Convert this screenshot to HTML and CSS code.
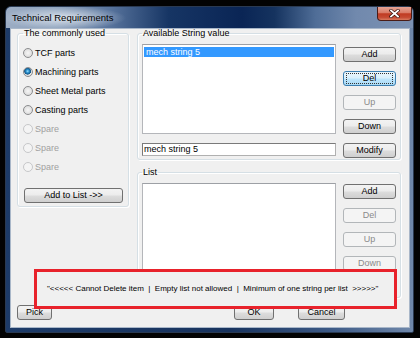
FILE: index.html
```html
<!DOCTYPE html>
<html>
<head>
<meta charset="utf-8">
<link rel="stylesheet" href="styles.css">
</head>
<body>
<div class="window">
  <div class="titlebar">
    <span class="title">Technical Requirements</span>
    <div class="close">
      <svg width="11" height="9" viewBox="0 0 11 9">
        <path d="M2 1.5 L9 7.5 M9 1.5 L2 7.5" stroke="#3a1410" stroke-width="3.2" stroke-linecap="square" fill="none"/>
        <path d="M2 1.5 L9 7.5 M9 1.5 L2 7.5" stroke="#ffffff" stroke-width="1.8" stroke-linecap="square" fill="none"/>
      </svg>
    </div>
  </div>
  <div class="client">
    <div class="main">
      <fieldset class="group common">
        <legend>The commonly used</legend>
        <div class="radios">
          <label class="radio"><span class="dot"></span>TCF parts</label>
          <label class="radio checked"><span class="dot"></span>Machining parts</label>
          <label class="radio"><span class="dot"></span>Sheet Metal parts</label>
          <label class="radio"><span class="dot"></span>Casting parts</label>
          <label class="radio disabled"><span class="dot"></span>Spare</label>
          <label class="radio disabled"><span class="dot"></span>Spare</label>
          <label class="radio disabled"><span class="dot"></span>Spare</label>
        </div>
        <button class="btn wide">Add to List -&gt;&gt;</button>
      </fieldset>
      <div class="rightcol">
        <fieldset class="group avail">
          <legend>Available String value</legend>
          <div class="pane">
            <div class="inputs">
              <div class="listbox short"><div class="item selected">mech string 5</div></div>
              <div class="textbox">mech string 5</div>
            </div>
            <div class="btncol">
              <button class="btn">Add</button>
              <button class="btn focused"><span class="focusrect">Del</span></button>
              <button class="btn" disabled>Up</button>
              <button class="btn">Down</button>
              <button class="btn">Modify</button>
            </div>
          </div>
        </fieldset>
        <fieldset class="group list">
          <legend>List</legend>
          <div class="pane">
            <div class="inputs">
              <div class="listbox tall"></div>
            </div>
            <div class="btncol top1">
              <button class="btn">Add</button>
              <button class="btn" disabled>Del</button>
              <button class="btn" disabled>Up</button>
              <button class="btn" disabled>Down</button>
            </div>
          </div>
        </fieldset>
      </div>
    </div>
    <div class="footer">
      <button class="btn pick">Pick</button>
      <div class="spacer"></div>
      <button class="btn ok">OK</button>
      <button class="btn cancel">Cancel</button>
    </div>
    <div class="note">"&lt;&lt;&lt;&lt;&lt; Cannot Delete item &nbsp;|&nbsp; Empty list not allowed &nbsp;|&nbsp; Minimum of one string per list &nbsp;&gt;&gt;&gt;&gt;&gt;"</div>
  </div>
</div>
</body>
</html>
```

FILE: styles.css
```css
* { box-sizing: border-box; }

body {
  margin: 0;
  width: 420px;
  height: 338px;
  overflow: hidden;
  background: #030303;
  font-family: "Liberation Sans", Arial, sans-serif;
  font-size: 9px;
  color: #000;
}

.window {
  margin: 6px 0 0 5px;
  width: 409px;
  height: 327px;
  border: 1px solid #2a3a52;
  border-radius: 6px 6px 2px 2px;
  background: linear-gradient(90deg, #1d3b68 0%, #18335e 55%, #3d5a86 80%, #7088aa 100%);
  padding: 0 3px 4px 4px;
  display: flex;
  flex-direction: column;
}

.titlebar {
  height: 21px;
  margin: 0 -3px 0 -4px;
  padding: 0 2px 0 5px;
  border-radius: 5px 5px 0 0;
  display: flex;
  align-items: flex-start;
  background:
    radial-gradient(ellipse 62px 12px at 58px 11px, rgba(235,240,246,0.85), rgba(235,240,246,0) 100%),
    linear-gradient(90deg, #9cadc4 0%, #8a9fba 12%, #56729b 26%, #163564 40%, #0a2555 58%, #15335f 66%, #4f6d97 76%, #7189ad 86%, #7c92b3 100%);
}

.title {
  flex: 1;
  padding-left: 1px;
  line-height: 21px;
  font-size: 9.5px;
  color: #000;
}

.close {
  width: 35px;
  height: 14px;
  margin-right: -1px;
  border: 1px solid #4a1c16;
  border-top: none;
  border-radius: 0 0 4px 4px;
  background: linear-gradient(#e6a595 0%, #d97a66 45%, #c03a22 52%, #c54a33 80%, #d87a5e 100%);
  display: flex;
  align-items: center;
  justify-content: center;
}

.client {
  position: relative;
  flex: 1;
  background: #f0f0f0;
  border: 1px solid #a9b7c9;
  padding: 0 8px 0 6px;
  display: flex;
  flex-direction: column;
}

.main {
  display: flex;
  gap: 8px;
  height: 269px;
}

.group {
  margin: 0;
  border: 1px solid #d5dfe5;
  border-radius: 3px;
  box-shadow: inset 1px 1px 0 #fff, 1px 1px 0 #fff;
  min-width: 0;
}

.group legend {
  padding: 0 1px;
  line-height: 9px;
  font-size: 9px;
}

.common {
  width: 113px;
  height: 178px;
  padding: 0 6px 0 5px;
  align-self: flex-start;
}

.radios {
  margin-top: 5px;
  display: flex;
  flex-direction: column;
}

.radio {
  height: 19px;
  display: flex;
  align-items: center;
  gap: 2px;
}

.dot {
  width: 10px;
  height: 10px;
  border-radius: 50%;
  border: 1px solid #8b8c8e;
  background: radial-gradient(circle at 50% 50%, #f6f6f6 0, #e2e2e2 60%, #d0d0d0 100%);
}

.radio.checked .dot {
  background:
    radial-gradient(circle at 45% 40%, #9fe0ff 0, #3a9ed6 1.3px, #15679f 2.6px, #1d5b8a 3.2px, rgba(0,0,0,0) 3.6px),
    radial-gradient(circle at 50% 50%, #f6f6f6 0, #e2e2e2 60%, #d0d0d0 100%);
}

.radio.disabled {
  color: #a0a0a0;
}

.radio.disabled .dot {
  border-color: #c6c7c9;
  background: #f4f4f4;
}

.btn {
  display: block;
  height: 15px;
  padding: 0;
  margin: 0;
  border: 1px solid #707070;
  border-radius: 3px;
  background: linear-gradient(#f3f3f3 0%, #ececec 48%, #dddddd 52%, #cfcfcf 100%);
  font-family: inherit;
  font-size: 9px;
  line-height: 13px;
  color: #000;
  text-align: center;
}

.btn:disabled {
  border-color: #b2b6b9;
  background: #f4f4f4;
  color: #8a8a8a;
}

.btn.focused {
  border-color: #3c7fb1;
  background: linear-gradient(#eaf6fd 0%, #d9f0fc 48%, #bee6fd 52%, #a9daf6 100%);
  padding: 1px 2px;
}

.focusrect {
  display: block;
  height: 11px;
  line-height: 9px;
  border: 1px dotted #333;
}

.wide {
  width: 99px;
  margin: 12px 0 0 1px;
}

.rightcol {
  width: 264px;
  display: flex;
  flex-direction: column;
}

.avail {
  height: 131px;
  padding: 0 4px;
}

.list {
  height: 130px;
  margin-top: 8px;
  padding: 0 4px;
}

.pane {
  display: flex;
  gap: 7px;
  margin-top: 6px;
}

.inputs {
  width: 194px;
  display: flex;
  flex-direction: column;
}

.listbox {
  background: #fff;
  border: 1px solid #b4b6ba;
  border-top-color: #9da0a5;
  padding: 2px 1px;
}

.listbox.short { height: 90px; }
.listbox.tall { height: 112px; }

.item {
  height: 10px;
  line-height: 10px;
  padding-left: 2px;
}

.item.selected {
  background: #3399ff;
  color: #fff;
}

.textbox {
  margin-top: 9px;
  height: 13px;
  line-height: 11px;
  padding-left: 1px;
  background: #fff;
  border: 1px solid #7a7a7a;
  border-right-color: #b0b0b0;
  border-bottom-color: #b0b0b0;
}

.btncol {
  width: 53px;
  padding-top: 3px;
  display: flex;
  flex-direction: column;
  gap: 9px;
}

.btncol.top1 { padding-top: 1px; }

.btncol .btn { width: 53px; }

.footer {
  margin-top: 7px;
  height: 15px;
  display: flex;
  gap: 24px;
  padding-right: 56px;
}

.spacer { flex: 1; }

.pick { width: 35px; }
.ok { width: 40px; }
.cancel { width: 47px; }

.note {
  position: absolute;
  left: 23px;
  top: 240px;
  width: 363px;
  height: 40px;
  border: 3px solid #e8222b;
  background: #f0f0f0;
  padding: 0 0 1px 10px;
  display: flex;
  align-items: center;
  white-space: nowrap;
  font-size: 8px;
}
```
